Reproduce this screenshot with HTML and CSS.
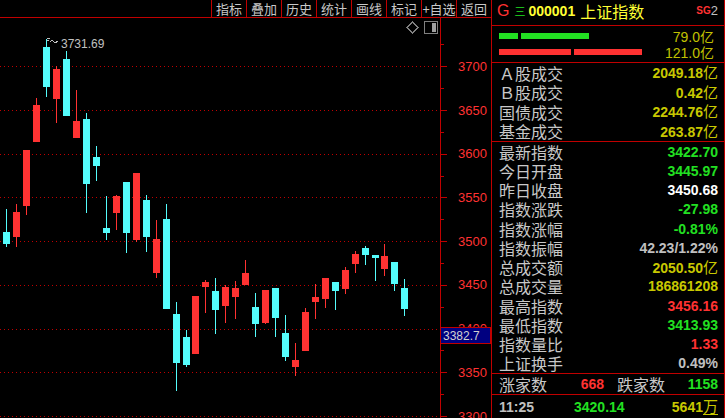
FILE: index.html
```html
<!DOCTYPE html>
<html lang="zh-CN">
<head>
<meta charset="UTF-8">
<meta name="viewport" content="width=device-width, initial-scale=1.0">
<title>上证指数 日线</title>
<link rel="stylesheet" href="styles.css">
</head>
<body>

<div class="screen">
    <div class="kline">
        <div class="toolbar">
            <span class="tool">指标</span>
            <span class="tool">叠加</span>
            <span class="tool">历史</span>
            <span class="tool">统计</span>
            <span class="tool">画线</span>
            <span class="tool">标记</span>
            <span class="tool">+自选</span>
            <span class="tool">返回</span>
        </div>
        <svg id="chart" class="chart" width="491" height="400">
            <!-- 右上角小按钮 -->
            <polygon class="icon" points="412.5,4 418,9.5 412.5,15 407,9.5"></polygon>
            <rect class="icon" x="424.5" y="3.5" width="13" height="12"></rect>
            <rect class="icon-fill" x="432" y="5" width="4" height="9"></rect>
        </svg>
    </div>

    <div class="quote">
        <div class="q-head">
            <span class="mark-g">G</span>
            <span class="mark-menu">三</span>
            <span class="code">000001</span>
            <span class="name">上证指数</span>
            <span class="sg">SG</span><span class="sg-n">2</span>
        </div>

        <div class="q-bars">
            <div class="bar-row">
                <div class="bar-track">
                    <i class="bar green" style="width:19px"></i>
                    <i class="bar green" style="width:68px"></i>
                </div>
                <span class="bar-val">79.0亿</span>
            </div>
            <div class="bar-row">
                <div class="bar-track">
                    <i class="bar red" style="width:72px"></i>
                    <i class="bar red" style="width:68px"></i>
                </div>
                <span class="bar-val">121.0亿</span>
            </div>
        </div>

        <div class="q-sec q-amt">
            <div class="row"><span class="lbl">Ａ股成交</span><b class="val yellow">2049.18<small>亿</small></b></div>
            <div class="row"><span class="lbl">Ｂ股成交</span><b class="val yellow">0.42<small>亿</small></b></div>
            <div class="row"><span class="lbl">国债成交</span><b class="val yellow">2244.76<small>亿</small></b></div>
            <div class="row"><span class="lbl">基金成交</span><b class="val yellow">263.87<small>亿</small></b></div>
        </div>

        <div class="q-sec q-main">
            <div class="row"><span class="lbl">最新指数</span><b class="val green">3422.70</b></div>
            <div class="row"><span class="lbl">今日开盘</span><b class="val green">3445.97</b></div>
            <div class="row"><span class="lbl">昨日收盘</span><b class="val white">3450.68</b></div>
            <div class="row"><span class="lbl">指数涨跌</span><b class="val green">-27.98</b></div>
            <div class="row"><span class="lbl">指数涨幅</span><b class="val green">-0.81%</b></div>
            <div class="row"><span class="lbl">指数振幅</span><b class="val gray">42.23/1.22%</b></div>
            <div class="row"><span class="lbl">总成交额</span><b class="val yellow">2050.50<small>亿</small></b></div>
            <div class="row"><span class="lbl">总成交量</span><b class="val yellow">186861208</b></div>
            <div class="row"><span class="lbl">最高指数</span><b class="val red">3456.16</b></div>
            <div class="row"><span class="lbl">最低指数</span><b class="val green">3413.93</b></div>
            <div class="row"><span class="lbl">指数量比</span><b class="val red">1.33</b></div>
            <div class="row"><span class="lbl">上证换手</span><b class="val gray">0.49%</b></div>
        </div>

        <div class="q-adv">
            <div class="adv"><span class="lbl">涨家数</span><b class="val red">668</b></div>
            <div class="adv adv-down"><span class="lbl">跌家数</span><b class="val green">1158</b></div>
        </div>

        <div class="q-tick">
            <b class="time">11:25</b>
            <b class="val green">3420.14</b>
            <b class="val yellow vol">5641<small class="cursor">万</small></b>
        </div>
    </div>
</div>

<script>
    var NS = 'http://www.w3.org/2000/svg';
    var chart = document.getElementById('chart');
    var K = 0.8743; // 每点对应的像素

    // 日线数据: 开, 高, 低, 收
    var bars = [
        [3510.5, 3536.8, 3493.3, 3496.7],
        [3504.8, 3542.5, 3493.3, 3533.3],
        [3540.2, 3604.3, 3529.9, 3604.3],
        [3613.4, 3663.7, 3613.4, 3655.7],
        [3722.1, 3731.69, 3664.9, 3676.3],
        [3662.6, 3700.3, 3635.1, 3696.9],
        [3708.3, 3717.5, 3643.2, 3643.2],
        [3618.0, 3672.9, 3618.0, 3637.4],
        [3639.7, 3646.6, 3532.2, 3565.4],
        [3596.3, 3608.8, 3568.8, 3586.0],
        [3515.1, 3551.6, 3501.3, 3509.3],
        [3532.2, 3552.8, 3512.8, 3551.6],
        [3567.7, 3567.7, 3486.5, 3509.3],
        [3501.3, 3578.0, 3499.0, 3578.0],
        [3547.1, 3552.8, 3487.6, 3504.8],
        [3463.6, 3524.2, 3457.9, 3502.5],
        [3525.3, 3542.5, 3422.4, 3422.4],
        [3416.7, 3430.4, 3328.6, 3360.6],
        [3390.4, 3398.4, 3356.1, 3358.3],
        [3370.9, 3437.3, 3370.9, 3437.3],
        [3447.6, 3455.6, 3417.8, 3453.3],
        [3443.0, 3457.9, 3393.8, 3421.3],
        [3425.8, 3449.8, 3406.4, 3447.6],
        [3436.1, 3454.4, 3411.0, 3446.4],
        [3449.8, 3478.4, 3449.8, 3463.6],
        [3424.7, 3440.7, 3390.4, 3405.2],
        [3406.4, 3444.1, 3405.2, 3444.1],
        [3446.4, 3446.4, 3390.4, 3412.1],
        [3395.0, 3415.5, 3362.9, 3367.5],
        [3356.1, 3383.5, 3345.8, 3364.1],
        [3374.4, 3423.5, 3374.4, 3419.0],
        [3430.4, 3451.0, 3411.0, 3436.1],
        [3433.8, 3457.9, 3423.5, 3457.9],
        [3453.3, 3453.3, 3421.3, 3443.0],
        [3445.3, 3470.4, 3439.6, 3467.0],
        [3473.9, 3488.7, 3463.6, 3485.3],
        [3492.2, 3494.5, 3472.7, 3484.2],
        [3484.2, 3484.2, 3454.4, 3480.7],
        [3468.2, 3496.7, 3460.1, 3483.0],
        [3476.2, 3476.2, 3443.0, 3450.68],
        [3445.97, 3456.16, 3413.93, 3422.70]
    ];

    function py(p) {
        return 48.3 + (3700 - p) * K;
    }

    function add(tag, attrs, text) {
        var node = document.createElementNS(NS, tag);
        for (var k in attrs) {
            node.setAttribute(k, attrs[k]);
        }
        if (text !== undefined) {
            node.textContent = text;
        }
        chart.appendChild(node);
        return node;
    }

    // 网格虚线
    for (var p = 3700; p >= 3300; p -= 50) {
        var gy = Math.round(py(p)) + 0.5;
        add('line', { x1: 0, x2: 440, y1: gy, y2: gy, 'class': 'grid' });
    }

    // 右侧坐标轴
    add('line', { x1: 440.5, x2: 440.5, y1: 0, y2: 400, 'class': 'axis' });
    for (var q = 3725; q >= 3300; q -= 25) {
        var ty = Math.round(py(q)) + 0.5;
        var major = q % 50 === 0;
        add('line', { x1: 441, x2: major ? 447 : 444, y1: ty, y2: ty, 'class': 'axis' });
        if (major) {
            add('text', { x: 458, y: py(q), 'class': 'axis-label' }, q);
        }
    }

    // K线
    bars.forEach(function(b, i) {
        var x = Math.round(3.4 + i * 9.95);
        var cls = b[3] >= b[0] ? 'up' : 'down';
        add('line', { x1: x + 3.5, x2: x + 3.5, y1: Math.round(py(b[1])), y2: Math.round(py(b[2])), 'class': 'wick ' + cls });
        var top = Math.round(py(Math.max(b[0], b[3])));
        var bottom = Math.round(py(Math.min(b[0], b[3])));
        add('rect', { x: x, y: top, width: 7, height: Math.max(1, bottom - top), 'class': 'body ' + cls });
    });

    // 最高点标注
    add('path', { d: 'M47 20.5H50 M47 22.5H49 M50 23.5L52 22.5L55 24.5L58 23.5', 'class': 'peak-mark' });
    add('text', { x: 61, y: 25.5, 'class': 'peak-label' }, '3731.69');

    // 十字光标价格
    add('rect', { x: 440.5, y: 309.5, width: 50, height: 16, 'class': 'price-box' });
    add('text', { x: 443, y: 317.5, 'class': 'price-text' }, '3382.7');
</script>

</body>
</html>
```

FILE: styles.css
```css
body {
    margin: 0;
    background-color: #000;
    color: #c0c0c0;
    font-family: "Liberation Sans", Arial, sans-serif;
    overflow: hidden;
}
.screen {
    display: flex;
    width: 725px;
    height: 418px;
}

/* 左侧K线区 */
.kline {
    width: 491px;
    display: flex;
    flex-direction: column;
}
.toolbar {
    height: 17px;
    display: flex;
    justify-content: flex-end;
    border-bottom: 1px solid #c00000;
}
.tool {
    width: 34px;
    border-left: 1px solid #c00000;
    font: 13px/17px "Noto Sans CJK SC", sans-serif;
    text-align: center;
    white-space: nowrap;
    color: #c8c8c8;
}
.chart {
    display: block;
    shape-rendering: crispEdges;
}
.grid {
    stroke: #c00000;
    stroke-dasharray: 1 3;
}
.axis {
    stroke: #c00000;
}
.axis-label {
    font: 13px "Liberation Sans", Arial, sans-serif;
    fill: #ff3232;
    dominant-baseline: central;
}
.wick.up {
    stroke: #ff3232;
}
.wick.down {
    stroke: #54fcfc;
}
.body.up {
    fill: #ff3232;
}
.body.down {
    fill: #54fcfc;
}
.icon {
    fill: none;
    stroke: #808080;
}
.icon-fill {
    fill: #a0a0a0;
}
.peak-mark {
    fill: none;
    stroke: #c0c0c0;
}
.peak-label {
    font: 12px "Liberation Sans", Arial, sans-serif;
    fill: #c0c0c0;
    dominant-baseline: central;
}
.price-box {
    fill: #000080;
    stroke: #c00000;
}
.price-text {
    font: 12px "Liberation Sans", Arial, sans-serif;
    fill: #d0d0d0;
    dominant-baseline: central;
}

/* 右侧行情栏 */
.quote {
    width: 232px;
    display: flex;
    flex-direction: column;
    border-left: 1px solid #c00000;
    border-right: 1px solid #c00000;
}
.q-head {
    height: 21px;
    padding: 0 6px 4px 5px;
    display: flex;
    align-items: center;
    border-bottom: 1px solid #c00000;
}
.mark-g {
    font-size: 16px;
    color: #ff3232;
}
.mark-menu {
    margin-left: 5px;
    font: 11px "Noto Sans CJK SC", sans-serif;
    color: #22e022;
}
.code {
    margin-left: 3px;
    font-size: 14px;
    font-weight: bold;
    color: #ffff33;
}
.name {
    margin-left: 5px;
    font: 16px/1 "Noto Sans CJK SC", sans-serif;
    color: #ffff33;
}
.sg {
    margin-left: auto;
    font-size: 10px;
    font-weight: bold;
    color: #ff3232;
}
.sg-n {
    font-size: 13px;
    color: #c0c0c0;
}

.q-bars {
    height: 34px;
    padding-top: 2px;
    border-bottom: 1px solid #c00000;
}
.bar-row {
    height: 16px;
    display: flex;
    align-items: center;
    padding: 0 10px 0 7px;
}
.bar-track {
    display: flex;
    gap: 3px;
}
.bar {
    display: block;
    height: 6px;
}
.bar.green {
    background-color: #22e022;
}
.bar.red {
    background-color: #ff3232;
}
.bar-val {
    margin-left: auto;
    font-size: 14px;
    color: #c0c000;
}
.bar-val, .val small {
    font-family: "Liberation Sans", "Noto Sans CJK SC", sans-serif;
}

.q-sec {
    display: grid;
    border-bottom: 1px solid #c00000;
}
.q-amt {
    height: 78px;
    grid-template-rows: repeat(4, 1fr);
}
.q-main {
    height: 231px;
    grid-template-rows: repeat(12, 1fr);
}
.row {
    display: flex;
    align-items: center;
    justify-content: space-between;
    padding: 0 6px 0 7px;
}
.lbl {
    font: 16px/1 "Noto Sans CJK SC", sans-serif;
    color: #c8c8c8;
}
.val {
    font-size: 14px;
    font-weight: bold;
    line-height: 1;
}
.val small {
    font-size: 15px;
    font-weight: normal;
}
.yellow {
    color: #c8c800;
}
.green {
    color: #22e022;
}
.red {
    color: #ff3232;
}
.white {
    color: #ffffff;
}
.gray {
    color: #c0c0c0;
}

.q-adv {
    height: 20px;
    display: grid;
    grid-template-columns: 1fr 1fr;
    border-bottom: 1px solid #c00000;
}
.adv {
    display: flex;
    align-items: center;
    justify-content: space-between;
    padding: 0 4px 0 7px;
}
.adv-down {
    padding: 0 6px 0 9px;
}

.q-tick {
    flex: 1;
    display: flex;
    align-items: center;
    padding: 0 6px 0 7px;
}
.time {
    width: 75px;
    font-size: 14px;
    color: #c0c0c0;
}
.vol {
    margin-left: auto;
}
.cursor {
    display: inline-block;
    line-height: 15px;
    border-bottom: 1px solid #c8c800;
}
```
